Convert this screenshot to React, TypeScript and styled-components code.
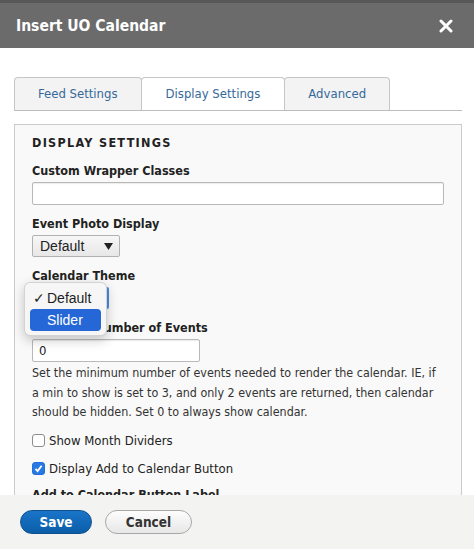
import React from 'react';
import styled, { createGlobalStyle } from 'styled-components';

const GlobalStyle = createGlobalStyle`
	html, body {
		margin: 0;
		padding: 0;
		background: #fff;
	}
	body {
		font-family: 'DejaVu Sans Condensed', 'DejaVu Sans', 'Liberation Sans', sans-serif;
		color: #222;
	}
`;

const Dialog = styled.div`
	width: 474px;
	height: 549px;
	display: flex;
	flex-direction: column;
	overflow: hidden;
	background: #fff;
`;

const TitleBar = styled.div`
	height: 48px;
	flex: none;
	box-sizing: border-box;
	display: flex;
	align-items: center;
	justify-content: space-between;
	padding: 0 21px 0 16px;
	background: #6b6b6b;
	border-top: 3px solid #585858;
`;

const Title = styled.h1`
	margin: 0;
	font-size: 15.5px;
	font-weight: bold;
	color: #fff;
`;

const CloseButton = styled.button`
	width: 14px;
	height: 14px;
	padding: 0;
	border: none;
	background: none;
	display: flex;
`;

const Body = styled.div`
	flex: 1;
	overflow: hidden;
	padding: 29px 12px 0 14px;
`;

const TabBar = styled.div`
	display: flex;
	border-bottom: 1px solid #bdbdbd;
`;

const Tab = styled.div<{ active?: boolean }>`
	height: 32px;
	line-height: 32px;
	padding: 0 ${(p) => (p.active ? 24 : 23)}px;
	margin-right: -1px;
	border: 1px solid #c6c6c6;
	border-bottom: none;
	border-radius: 4px 4px 0 0;
	background: ${(p) => (p.active ? '#fff' : '#f3f3f3')};
	font-size: 13px;
	color: #35699a;
`;

const Fieldset = styled.div`
	margin-top: 13px;
	border: 1px solid #cbcbcb;
	background: #f9f9f9;
	padding: 10px 17px 0;
	height: 400px;
`;

const Legend = styled.div`
	font-size: 12.5px;
	line-height: 16px;
	font-weight: bold;
	letter-spacing: 1.3px;
	text-transform: uppercase;
	margin-bottom: 12px;
	color: #222;
`;

const FormItem = styled.div`
	position: relative;
	margin-bottom: 11px;
`;

const Label = styled.label`
	display: block;
	font-size: 12.5px;
	line-height: 16px;
	font-weight: bold;
	margin-bottom: 3px;
`;

const TextInput = styled.div<{ width?: number }>`
	box-sizing: border-box;
	width: ${(p) => (p.width ? `${p.width}px` : '100%')};
	height: 23px;
	border: 1px solid #b9b9b9;
	border-radius: 2px;
	background: #fff;
	box-shadow: inset 0 1px 1px rgba(0, 0, 0, 0.08);
	padding: 0 6px;
	font-size: 13px;
	line-height: 21px;
	color: #222;
`;

const Select = styled.div<{ focused?: boolean }>`
	box-sizing: border-box;
	display: flex;
	align-items: center;
	justify-content: space-between;
	width: ${(p) => (p.focused ? 77 : 88)}px;
	height: 22px;
	padding: 0 6px 0 7px;
	border: ${(p) => (p.focused ? '2px solid #4a8ae0' : '1px solid #b2b2b2')};
	border-radius: 2px;
	background: linear-gradient(#f7f7f7, #e7e7e7);
	font-family: 'Liberation Sans', sans-serif;
	font-size: 14px;
	color: #222;
`;

const Popup = styled.div`
	position: absolute;
	z-index: 5;
	left: -8px;
	top: 14px;
	width: 83px;
	box-sizing: border-box;
	padding: 4px 5px;
	border: 1px solid rgba(0, 0, 0, 0.14);
	border-radius: 6px;
	background: #f6f6f6;
	box-shadow: 0 4px 12px rgba(0, 0, 0, 0.22);
	font-family: 'Liberation Sans', sans-serif;
	font-size: 14px;
`;

const Option = styled.div<{ highlighted?: boolean }>`
	position: relative;
	height: 22px;
	line-height: 22px;
	padding-left: 17px;
	border-radius: 4px;
	background: ${(p) => (p.highlighted ? '#2567d6' : 'transparent')};
	color: ${(p) => (p.highlighted ? '#fff' : '#1d1d1d')};
`;

const Check = styled.span`
	position: absolute;
	left: 3px;
	top: 0;
`;

const Description = styled.div`
	margin-top: 1px;
	margin-bottom: -2px;
	font-size: 12.4px;
	line-height: 19.5px;
	color: #333;
`;

const CheckRow = styled.div`
	display: flex;
	align-items: center;
	gap: 4px;
	height: 20px;
	margin-bottom: 8px;
	font-size: 13px;
	color: #222;
`;

const Box = styled.span<{ checked?: boolean }>`
	box-sizing: border-box;
	width: 13px;
	height: 13px;
	border-radius: 3px;
	border: 1px solid ${(p) => (p.checked ? '#1f6fdc' : '#8d8d8d')};
	background: ${(p) => (p.checked ? '#2a79e3' : '#fff')};
	display: flex;
	align-items: center;
	justify-content: center;
`;

const Footer = styled.div`
	height: 54px;
	flex: none;
	display: flex;
	align-items: center;
	gap: 13px;
	padding-left: 20px;
	background: #f3f3f2;
`;

const Button = styled.button<{ primary?: boolean }>`
	height: 24px;
	width: ${(p) => (p.primary ? 72 : 87)}px;
	border-radius: 12px;
	border: 1px solid ${(p) => (p.primary ? '#10508c' : '#a8a8a8')};
	background: ${(p) => (p.primary ? 'linear-gradient(#1a74c8, #0b5ea9)' : 'linear-gradient(#fdfdfd, #e7e7e7)')};
	color: ${(p) => (p.primary ? '#fff' : '#333')};
	font-family: 'DejaVu Sans Condensed', 'DejaVu Sans', sans-serif;
	font-size: 13.5px;
	font-weight: bold;
	padding: 0;
`;

export default function App() {
	return (
		<>
			<GlobalStyle />
			<Dialog>
				<TitleBar>
					<Title>Insert UO Calendar</Title>
					<CloseButton aria-label="Close">
						<svg width="14" height="14" viewBox="0 0 14 14">
							<path d="M2 2 L12 12 M12 2 L2 12" stroke="#fff" strokeWidth="3" strokeLinecap="round" />
						</svg>
					</CloseButton>
				</TitleBar>
				<Body>
					<TabBar>
						<Tab>Feed Settings</Tab>
						<Tab active>Display Settings</Tab>
						<Tab>Advanced</Tab>
					</TabBar>
					<Fieldset>
						<Legend>Display settings</Legend>
						<FormItem>
							<Label>Custom Wrapper Classes</Label>
							<TextInput />
						</FormItem>
						<FormItem>
							<Label>Event Photo Display</Label>
							<Select>
								Default
								<svg width="9" height="7" viewBox="0 0 9 7">
									<path d="M0 0 H9 L4.5 7 Z" fill="#222" />
								</svg>
							</Select>
						</FormItem>
						<FormItem>
							<Label>Calendar Theme</Label>
							<Select focused>Default</Select>
							<Popup>
								<Option>
									<Check>✓</Check>Default
								</Option>
								<Option highlighted>Slider</Option>
							</Popup>
						</FormItem>
						<FormItem>
							<Label>Minimum Number of Events</Label>
							<TextInput width={168}>0</TextInput>
							<Description>
								Set the minimum number of events needed to render the calendar. IE, if a min to show is set
								to 3, and only 2 events are returned, then calendar should be hidden. Set 0 to always show
								calendar.
							</Description>
						</FormItem>
						<CheckRow>
							<Box />
							Show Month Dividers
						</CheckRow>
						<CheckRow>
							<Box checked>
								<svg width="9" height="9" viewBox="0 0 9 9">
									<path d="M1.5 4.8 L3.6 7 L7.6 1.8" stroke="#fff" strokeWidth="1.8" fill="none" />
								</svg>
							</Box>
							Display Add to Calendar Button
						</CheckRow>
						<Label>Add to Calendar Button Label</Label>
					</Fieldset>
				</Body>
				<Footer>
					<Button primary>Save</Button>
					<Button>Cancel</Button>
				</Footer>
			</Dialog>
		</>
	);
}
